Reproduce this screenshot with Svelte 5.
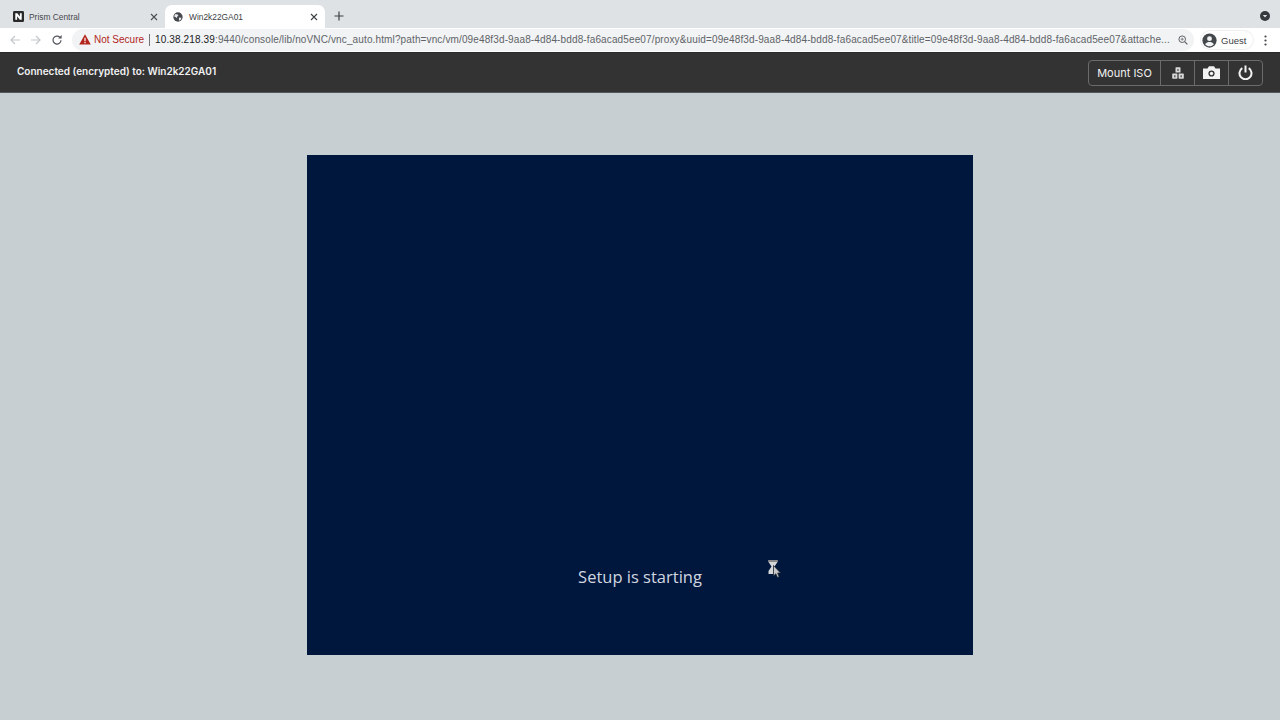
<script>
	const host = '10.38.218.39';
	const rest = ':9440/console/lib/noVNC/vnc_auto.html?path=vnc/vm/09e48f3d-9aa8-4d84-bdd8-fa6acad5ee07/proxy&uuid=09e48f3d-9aa8-4d84-bdd8-fa6acad5ee07&title=09e48f3d-9aa8-4d84-bdd8-fa6acad5ee07&attache...';
</script>

<div class="page">
	<div class="tabstrip">
		<div class="tab">
			<svg class="favicon" width="11" height="11" viewBox="0 0 12 12">
				<rect width="12" height="12" rx="1.500" fill="#2a2a2a" />
				<path d="M2.500 2.500h2.200l2.800 3.600V2.500h2v7H7.400L4.500 5.800v3.700h-2z" fill="#fff" />
			</svg>
			<span class="tab-title">Prism Central</span>
			<svg class="tab-close" width="8" height="8" viewBox="0 0 8 8"><path d="M1 1l6 6M7 1L1 7" stroke="#4a4d51" stroke-width="1.100" /></svg>
		</div>
		<div class="tab active">
			<svg class="favicon" width="10" height="10" viewBox="0 0 12 12">
				<circle cx="6" cy="6" r="5.600" fill="#45484c" />
				<path d="M3 2.500l2.500.6 1 1.500-1.600 1.200-.2 1.600-1.400-1L1.200 5zM7.500 6.600l2.600.4-.9 2.500-1.600 1-.7-2.200z" fill="#e8eaed" />
			</svg>
			<span class="tab-title">Win2k22GA01</span>
			<svg class="tab-close" width="8" height="8" viewBox="0 0 8 8"><path d="M1 1l6 6M7 1L1 7" stroke="#3c4043" stroke-width="1.100" /></svg>
		</div>
		<svg class="new-tab" width="10" height="10" viewBox="0 0 10 10"><path d="M5 .5v9M.5 5h9" stroke="#3c4043" stroke-width="1.200" /></svg>
		<svg class="tab-search" width="10" height="10" viewBox="0 0 10 10">
			<circle cx="5" cy="5" r="5" fill="#36393d" />
			<path d="M2.800 4h4.400L5 6.600z" fill="#dee1e6" />
		</svg>
	</div>

	<div class="toolbar">
		<svg class="nav" width="12" height="12" viewBox="0 0 12 12"><path d="M11 6H2M6 2L2 6l4 4" fill="none" stroke="#c4c8cb" stroke-width="1.200" /></svg>
		<svg class="nav fwd" width="12" height="12" viewBox="0 0 12 12"><path d="M1 6h9M6 2l4 4-4 4" fill="none" stroke="#c4c8cb" stroke-width="1.200" /></svg>
		<svg class="nav reload" width="12" height="12" viewBox="0 0 12 12"><path d="M10 6.200A4 4 0 1 1 8.800 3.200" fill="none" stroke="#50545a" stroke-width="1.200" /><path d="M10.600 1v3.400H7.200z" fill="#50545a" /></svg>
		<div class="omnibox">
			<svg width="12" height="11" viewBox="0 0 12 11"><path d="M6 .3l5.800 10.200H.2z" fill="#b3261e" /><path d="M5.400 3.800h1.200v3.400H5.400zM5.400 8h1.200v1.200H5.400z" fill="#fff" /></svg>
			<span class="not-secure">Not Secure</span>
			<span class="sep"></span>
			<span class="url"><span class="host">{host}</span>{rest}</span>
			<svg class="zoom-icon" width="10" height="10" viewBox="0 0 10 10"><circle cx="4.200" cy="4.200" r="3.300" fill="none" stroke="#5f6368" stroke-width="1" /><path d="M6.600 6.600l2.800 2.800" stroke="#5f6368" stroke-width="1.200" /><path d="M2.600 4.200h3.200M4.200 2.600v3.200" stroke="#5f6368" stroke-width=".7" /></svg>
		</div>
		<div class="profile">
			<svg width="15" height="15" viewBox="0 0 16 16">
				<circle cx="8" cy="8" r="7.600" fill="#44474b" />
				<circle cx="8" cy="6" r="2.600" fill="#f1f3f4" />
				<path d="M3.300 12c1-1.800 3-2.400 4.700-2.400s3.700.6 4.700 2.400c-1.100 1.300-2.800 2.200-4.700 2.200s-3.600-.9-4.700-2.200z" fill="#f1f3f4" />
			</svg>
			<span>Guest</span>
		</div>
		<svg class="menu" width="3" height="11" viewBox="0 0 3 11"><circle cx="1.500" cy="1.500" r="1.100" fill="#44474b" /><circle cx="1.500" cy="5.500" r="1.100" fill="#44474b" /><circle cx="1.500" cy="9.500" r="1.100" fill="#44474b" /></svg>
	</div>

	<div class="vnc-bar">
		<span class="status">Connected (encrypted) to: Win2k22GA01</span>
		<div class="actions">
			<button class="mount">Mount ISO</button>
			<button class="icon-btn">
				<svg width="12" height="12" viewBox="0 0 12 12" fill="#d8d8d8">
					<rect x="3.500" y="0.300" width="5" height="5.200" rx=".6" />
					<rect x="0.200" y="6.500" width="5.200" height="5.200" rx=".6" />
					<rect x="6.600" y="6.500" width="5.200" height="5.200" rx=".6" />
					<path d="M5.300 2h1.400v2H5.300zM2 8.200h1.600v2H2zM8.400 8.200H10v2H8.400z" fill="#666" />
				</svg>
			</button>
			<button class="icon-btn">
				<svg width="17" height="13" viewBox="0 0 17 13">
					<path d="M0 2.500h4.500L6 .3h5l1.500 2.200H17V13H0z" fill="#f2f2f2" />
					<circle cx="8.500" cy="7.500" r="3.100" fill="#333" />
					<circle cx="8.500" cy="7.500" r="1.700" fill="#f2f2f2" />
				</svg>
			</button>
			<button class="icon-btn">
				<svg width="15" height="15" viewBox="0 0 15 15" fill="none" stroke="#f2f2f2" stroke-width="2">
					<path d="M4.300 3.200a6 6 0 1 0 6.400 0" />
					<path d="M7.500 .5v7" />
				</svg>
			</button>
		</div>
	</div>

	<main class="stage">
		<div class="screen">
			<p class="setup">Setup is starting</p>
			<svg class="cursor" width="14" height="20" viewBox="0 0 14 20">
				<path d="M0.500 1h9v2L6.500 7.500 9.500 12v3h-9v-3l3-4.500L.5 3z" fill="#d4d6d8" />
				<path d="M.5 1h9v2h-9z" fill="#8a8a8a" />
				<path d="M5.500 6.500v10.500l2.300-2.200 1.700 3.700 1.700-.8-1.600-3.600h3z" fill="#c8c8c8" stroke="#1c2430" stroke-width=".8" />
			</svg>
		</div>
	</main>
</div>

<style>
	:global(body) {
		margin: 0;
	}
	.page {
		width: 1280px;
		height: 720px;
		display: flex;
		flex-direction: column;
		overflow: hidden;
		font-family: "Liberation Sans", Arial, sans-serif;
		background: #c8cfd3;
	}
	.tabstrip {
		height: 28px;
		flex: none;
		display: flex;
		align-items: flex-end;
		background: #dfe2e5;
		padding-left: 5px;
		box-sizing: border-box;
	}
	.tab {
		width: 160px;
		height: 23px;
		display: flex;
		align-items: center;
		box-sizing: border-box;
		padding: 0 7px 0 8px;
		border-radius: 7px 7px 0 0;
		font-size: 8.400px;
		color: #45484c;
	}
	.tab.active {
		background: #fff;
		color: #3c4043;
	}
	.tab-title {
		margin-left: 5px;
		flex: 1;
	}
	.tab.active .tab-title {
		margin-left: 6px;
	}
	.new-tab {
		margin: 0 0 7px 9px;
	}
	.tab-search {
		margin: 0 10px 7px auto;
	}
	.toolbar {
		height: 24px;
		flex: none;
		display: flex;
		align-items: center;
		background: #fff;
		padding: 0 13px 0 9px;
		box-sizing: border-box;
	}
	.nav {
		margin-right: 9px;
	}
	.omnibox {
		width: 1122px;
		height: 22px;
		flex: none;
		display: flex;
		align-items: center;
		box-sizing: border-box;
		padding: 0 6px 1px 7px;
		border-radius: 11px;
		background: #f1f3f4;
		font-size: 10px;
	}
	.not-secure {
		color: #b3261e;
		margin-left: 3px;
	}
	.sep {
		width: 1px;
		height: 12px;
		background: #70757a;
		margin: 0 5px 0 5px;
	}
	.url {
		flex: 1;
		white-space: nowrap;
		overflow: hidden;
		color: #5f6368;
		letter-spacing: .13px;
	}
	.host {
		color: #202124;
	}
	.zoom-icon {
		margin-left: 6px;
		flex: none;
	}
	.profile {
		display: flex;
		align-items: center;
		gap: 4px;
		margin-left: 6px;
		padding: 0 8px 0 2px;
		height: 20px;
		border-radius: 10px;
		box-shadow: inset 0 0 0 1px #eef0f1;
		font-size: 9.500px;
		color: #3c4043;
	}
	.menu {
		margin-left: auto;
	}
	.vnc-bar {
		height: 41px;
		flex: none;
		display: flex;
		align-items: center;
		justify-content: space-between;
		box-sizing: border-box;
		padding: 0 17px 2px 17px;
		background: #333334;
		border-bottom: 1px solid #55585a;
		border-top: 1px solid #2a2a2a;
	}
	.status {
		font-family: Inter, "Liberation Sans", sans-serif;
		font-size: 10px;
		line-height: 14px;
		font-weight: 600;
		color: #f2f2f2;
		margin-bottom: 2px;
	}
	.actions {
		display: flex;
		height: 24px;
		border: 1px solid #6b6b6b;
		border-radius: 4px;
		margin-top: 2px;
	}
	button {
		background: none;
		border: 0;
		padding: 0;
		height: 100%;
		display: flex;
		align-items: center;
		justify-content: center;
		border-left: 1px solid #6b6b6b;
		color: #f2f2f2;
	}
	.mount {
		width: 71px;
		border-left: 0;
		font-family: Inter, "Liberation Sans", sans-serif;
		font-size: 11px;
	}
	.icon-btn {
		width: 34px;
	}
	.stage {
		flex: 1;
		display: flex;
		justify-content: center;
		align-items: flex-start;
		padding-top: 62px;
	}
	.screen {
		position: relative;
		width: 666px;
		height: 500px;
		display: flex;
		flex-direction: column;
		justify-content: flex-end;
		align-items: center;
		background: #00173d;
	}
	.setup {
		margin: 0 0 66px;
		font-family: "Open Sans", sans-serif;
		font-size: 16.500px;
		line-height: 24px;
		color: #d0d6e0;
	}
	.cursor {
		position: absolute;
		left: 461px;
		top: 404px;
	}
</style>
